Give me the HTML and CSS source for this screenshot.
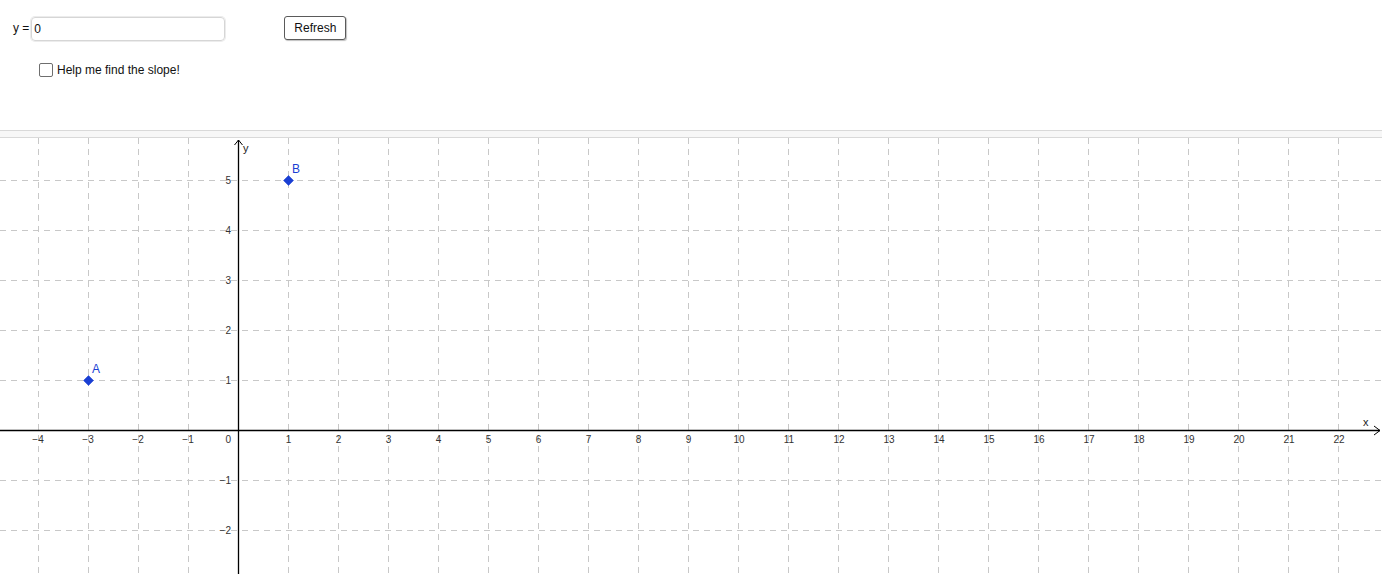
FILE: index.html
```html
<!DOCTYPE html>
<html>
<head>
<meta charset="utf-8">
<link rel="stylesheet" href="styles.css">
</head>
<body>
<div class="top">
  <div class="row1">
    <label class="eq">y =</label>
    <div class="input">0</div>
    <button class="btn">Refresh</button>
  </div>
  <div class="row2">
    <span class="cb"></span>
    <span class="cblabel">Help me find the slope!</span>
  </div>
</div>
<div class="band"></div>
<svg class="graph" width="1382" height="436" viewBox="0 0 1382 436">
  <path class="grid" d="M38.5 0V436M88.5 0V436M138.5 0V436M188.5 0V436M288.5 0V436M338.5 0V436M388.5 0V436M438.5 0V436M488.5 0V436M538.5 0V436M588.5 0V436M638.5 0V436M688.5 0V436M738.5 0V436M788.5 0V436M838.5 0V436M888.5 0V436M938.5 0V436M988.5 0V436M1038.5 0V436M1088.5 0V436M1138.5 0V436M1188.5 0V436M1238.5 0V436M1288.5 0V436M1338.5 0V436M0 42.5H1382M0 92.5H1382M0 142.5H1382M0 192.5H1382M0 242.5H1382M0 342.5H1382M0 392.5H1382"/>
  <path class="axis" d="M0 292.5H1380M238.5 2V436"/>
  <path class="arrow" d="M1374 288L1380 292.5L1374 297M234.5 7L238.5 2L242.5 7"/>
  <g class="xl">
    <text x="38" y="305">−4</text>
    <text x="88" y="305">−3</text>
    <text x="138" y="305">−2</text>
    <text x="188" y="305">−1</text>
    <text x="288.5" y="305">1</text>
    <text x="338.5" y="305">2</text>
    <text x="388.5" y="305">3</text>
    <text x="438.5" y="305">4</text>
    <text x="488.5" y="305">5</text>
    <text x="538.5" y="305">6</text>
    <text x="588.5" y="305">7</text>
    <text x="638.5" y="305">8</text>
    <text x="688.5" y="305">9</text>
    <text x="739" y="305">10</text>
    <text x="789" y="305">11</text>
    <text x="839" y="305">12</text>
    <text x="889" y="305">13</text>
    <text x="939" y="305">14</text>
    <text x="989" y="305">15</text>
    <text x="1039" y="305">16</text>
    <text x="1089" y="305">17</text>
    <text x="1139" y="305">18</text>
    <text x="1189" y="305">19</text>
    <text x="1239" y="305">20</text>
    <text x="1289" y="305">21</text>
    <text x="1339" y="305">22</text>
  </g>
  <g class="yl">
    <text x="231" y="305">0</text>
    <text x="231" y="46">5</text>
    <text x="231" y="96">4</text>
    <text x="231" y="146">3</text>
    <text x="231" y="196">2</text>
    <text x="231" y="246">1</text>
    <text x="231" y="346">−1</text>
    <text x="231" y="396">−2</text>
  </g>
  <text class="axn" x="243" y="14">y</text>
  <text class="axn" x="1363" y="288">x</text>
  <path class="pt" d="M88.5 237.5L93.5 242.5L88.5 247.5L83.5 242.5Z"/>
  <path class="pt" d="M288.5 37.5L293.5 42.5L288.5 47.5L283.5 42.5Z"/>
  <text class="ptl" x="92" y="235">A</text>
  <text class="ptl" x="292" y="35">B</text>
</svg>
</body>
</html>
```
FILE: styles.css
```css
html, body {
  margin: 0;
  padding: 0;
  background: #fff;
  font-family: "Liberation Sans", Arial, sans-serif;
  overflow: hidden;
}
.top {
  height: 130px;
  box-sizing: border-box;
  padding-top: 15px;
}
.row1 {
  display: flex;
  align-items: center;
  height: 26px;
}
.eq {
  font-size: 12px;
  color: #111;
  margin-left: 13px;
  margin-right: 2px;
}
.input {
  width: 190px;
  height: 22px;
  border: 1px solid #d6d6d6;
  box-shadow: 0 0 0 1px #ececec;
  border-radius: 4px;
  font-size: 12px;
  line-height: 22px;
  padding-left: 2px;
  box-sizing: content-box;
  color: #111;
  margin-top: 1px;
}
.btn {
  margin-left: 59px;
  width: 62px;
  height: 24px;
  border: 1px solid #5a5a5a;
  border-radius: 3px;
  background: #fff;
  box-shadow: 1px 1px 1px rgba(0,0,0,0.25);
  font-family: "Liberation Sans", Arial, sans-serif;
  font-size: 12px;
  color: #111;
  padding: 0;
  margin-top: -1px;
}
.row2 {
  display: flex;
  align-items: center;
  margin-top: 22px;
  margin-left: 39px;
}
.cb {
  width: 12px;
  height: 12px;
  border: 1px solid #6e6e6e;
  border-radius: 2px;
  background: #fff;
}
.cblabel {
  font-size: 12px;
  color: #111;
  margin-left: 4px;
}
.band {
  height: 6px;
  border-top: 1px solid #d9d9d9;
  border-bottom: 1px solid #d9d9d9;
  background: #f7f7f7;
}
.graph {
  display: block;
}
.grid {
  fill: none;
  stroke: #c8c8c8;
  stroke-width: 1;
  stroke-dasharray: 6 5;
}
.axis {
  fill: none;
  stroke: #000;
  stroke-width: 1.3;
}
.arrow {
  fill: none;
  stroke: #000;
  stroke-width: 1;
}
.xl text {
  font-size: 10px;
  fill: #333;
  text-anchor: middle;
  font-family: "Liberation Sans", Arial, sans-serif;
}
.yl text {
  font-size: 10px;
  fill: #333;
  text-anchor: end;
  font-family: "Liberation Sans", Arial, sans-serif;
}
.axn {
  font-size: 11px;
  fill: #222;
  font-family: "Liberation Sans", Arial, sans-serif;
}
.pt {
  fill: #1a3fd3;
  stroke: #1a3fd3;
  stroke-width: 0.5;
}
.ptl {
  font-size: 12px;
  fill: #1a3fd3;
  font-family: "Liberation Sans", Arial, sans-serif;
}
```
